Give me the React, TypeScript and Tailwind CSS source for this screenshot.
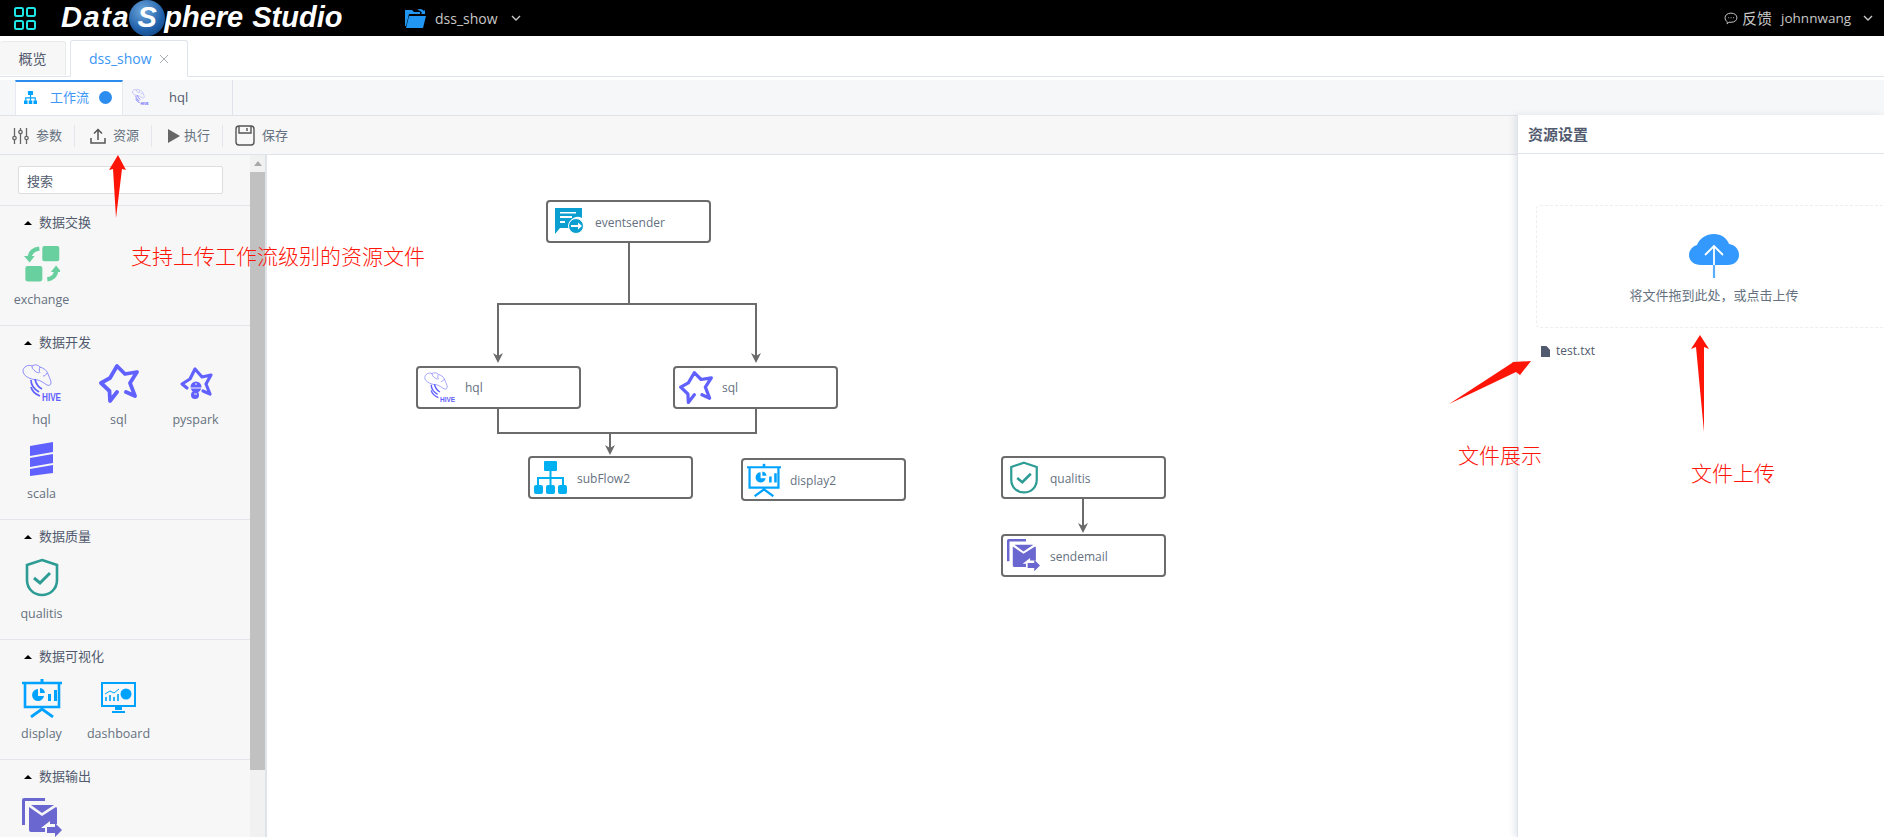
import React from "react";

const Hive = ({ s = 40 }: { s?: number }) => (
  <svg className="overflow-visible" width={s} height={s} viewBox="0 0 40 40" fill="none" stroke="#6161ff" strokeWidth="0.7">
    <path d="M1 7c0-4 5-7 9-5 3-2 6-1 8 1 3 1 7 3 8 7 1 3 3 6 3 9 0 2-2 3-4 2-3-2-6-4-9-5-5 0-15-3-15-9z" />
    <path d="M10 2c0 3 3 6 7 7M18 3c-1 2-1 4 0 6M25 9c-1 2-2 3-4 3" />
    <path d="M9 16c0 5 3 9 8 12M13 15c1 5 3 8 7 10M9 23c1 4 4 7 9 9" strokeWidth="1.700" />
    <text x="20" y="37" fontSize="10" fontWeight="700" fill="#6161ff" stroke="none" fontFamily="'Liberation Sans',sans-serif" textLength="19" lengthAdjust="spacingAndGlyphs">HIVE</text>
  </svg>
);

const Star = ({ s = 40 }: { s?: number }) => (
  <svg width={s} height={s} viewBox="0 0 40 40" fill="none" stroke="#6161ff" strokeWidth="3.800" strokeLinejoin="round" strokeLinecap="round">
    <path d="M27 28l9 4-5-13 7-11-12 2-8-8-7 12-9 5 8.500 8 .5 10 7-9" />
  </svg>
);

const PySpark = ({ s = 40 }: { s?: number }) => (
  <svg width={s} height={s} viewBox="0 0 40 40" fill="none">
    <path d="M27 27l7 3-4-10 5-9-9 2-7-8-5 10-8 5 5 4" stroke="#6161ff" strokeWidth="3.200" strokeLinejoin="round" strokeLinecap="round" />
    <circle cx="20" cy="23" r="5.500" fill="#6161ff" />
    <path d="M14 24h12M20 19v2" stroke="#f7f7f7" strokeWidth="1" />
    <circle cx="19" cy="31" r="4" fill="#6161ff" />
    <path d="M18 30h3" stroke="#f7f7f7" strokeWidth="1" />
  </svg>
);

const Scala = ({ s = 40 }: { s?: number }) => (
  <svg width={s} height={s} viewBox="0 0 40 40" fill="#6161ff">
    <path d="M8 8L31 4v10L8 18z" />
    <path d="M8 20l23-4v9L8 29z" />
    <path d="M8 31l23-4v8L8 38z" />
  </svg>
);

const Exchange = () => (
  <svg width="36" height="36" viewBox="0 0 34 34" fill="#68cf9e">
    <rect x="17.300" y="0" width="16" height="14.500" rx="2" />
    <rect x="1.300" y="19" width="16" height="14.500" rx="2" />
    <path d="M14.500 2.500C10 3 6 5.500 5.300 10.500" fill="none" stroke="#68cf9e" strokeWidth="4" />
    <path d="M5.300 15.500L0 9.500h10z" />
    <path d="M22 31.500c4-.5 8-3 8.300-8" fill="none" stroke="#68cf9e" strokeWidth="4" />
    <path d="M30.300 18.500l5 6h-10z" />
  </svg>
);

const Shield = ({ s = 40 }: { s?: number }) => (
  <svg width={s} height={s} viewBox="0 0 40 40" fill="none" stroke="#2d9c94" strokeWidth="2.600">
    <path d="M20 2l15 5v15c0 9-7 15-15 15S5 31 5 22V7z" />
    <path d="M12 20l6 5 10-10" strokeWidth="3" />
  </svg>
);

const Display = ({ s = 40 }: { s?: number }) => (
  <svg width={s} height={s} viewBox="0 0 40 40" fill="none" stroke="#00a2ff">
    <path d="M0 5h40" strokeWidth="2.400" />
    <path d="M20 1v4" strokeWidth="3" />
    <path d="M3 5v24h34V5" strokeWidth="2.600" />
    <path d="M20 29v2M9 39l11-8 11 8" strokeWidth="2.800" />
    <path d="M16 11a6 6 0 1 0 6 7h-6z" fill="#00a2ff" stroke="none" />
    <path d="M18 10a6 6 0 0 1 5 5h-5z" fill="#00a2ff" stroke="none" />
    <path d="M26 16v7h3v-7zM32 12v11h3V12z" fill="#00a2ff" stroke="none" />
  </svg>
);

const Dashboard = () => (
  <svg width="36" height="32" viewBox="0 0 36 32" fill="none" stroke="#00a2ff">
    <rect x="1" y="1" width="33" height="23" strokeWidth="2" />
    <path d="M14 24h7v4h-7zM11 29h13v2H11z" fill="#00a2ff" stroke="none" />
    <circle cx="25" cy="12" r="5.500" fill="#00a2ff" stroke="none" />
    <path d="M5 19v-4M9 19v-6M13 19v-4M17 19v-7" strokeWidth="1.600" />
    <path d="M4 12l5-3 4 2 5-4" strokeWidth="1" />
  </svg>
);

const SendEmail = ({ s = 40 }: { s?: number }) => (
  <svg width={s} height={s} viewBox="0 0 40 40" fill="#6a68d0">
    <path d="M0 2a2 2 0 0 1 2-2h21v3H3v24H0z" />
    <path d="M7 9l13 9 14-9a2 2 0 0 1 1 2v15h-7v-3l-9 7h4v4H9a2 2 0 0 1-2-2z" />
    <path d="M9 7h23L20 15z" />
    <path d="M25 29h8v-4l7 7-7 7v-4h-8z" />
  </svg>
);

const EventSender = () => (
  <svg width="30" height="28" viewBox="0 0 30 28" fill="#0a9fd0">
    <path d="M1 0h27v10a9 9 0 0 0-13 10H6l-5 6z" />
    <path d="M6 4h16v1.600H6zM6 8h12v2H6zM6 13h5v2H6z" fill="#fff" />
    <circle cx="22" cy="18" r="7.500" stroke="#fff" strokeWidth="1" />
    <path d="M17 17h7v-2.500l4 3.500-4 3.500V19h-7z" fill="#fff" />
  </svg>
);

const SubFlow = () => (
  <svg width="33" height="33" viewBox="0 0 33 33" fill="#00b0f0">
    <rect x="10" y="0" width="13" height="10" rx="1" />
    <rect x="0" y="24" width="9" height="9" rx="2" />
    <rect x="12" y="24" width="9" height="9" rx="2" />
    <rect x="24" y="24" width="9" height="9" rx="2" />
    <path d="M15.500 10h2v6H30v8h-2v-6h-10.500v6h-2v-6H5v6H3v-8h12.500z" />
  </svg>
);

const Sep = ({ cls }: { cls: string }) => <div className={`w-px h-[22px] bg-[#e3e6ec] ${cls}`} />;

const Section = ({ title, rows }: { title: string; rows: [React.ReactNode, string][][] }) => (
  <div className="border-b border-[#e3e5ea] pt-2 pb-[15px]">
    <div className="flex items-center h-[18px] pl-[24px] text-[13px] text-[#515a6e]">
      <span className="w-0 h-0 border-x-[4px] border-x-transparent border-b-[4px] border-b-black mr-[7px]" />
      {title}
    </div>
    <div className="mt-3 flex flex-col gap-[8px]">
      {rows.map((row, i) => (
        <div key={i} className="flex pl-[3px]">
          {row.map(([ic, l], j) => (
            <div key={j} className="w-[77px] flex flex-col items-center">
              <div className="h-[40px] flex items-center justify-center">{ic}</div>
              {l ? <div className="h-[20px] mt-[6px] text-[12.500px] leading-[20px] text-[#657180]">{l}</div> : null}
            </div>
          ))}
        </div>
      ))}
    </div>
  </div>
);

const Node = ({ cls, icon, label, iconCls, labelCls = "mt-[2px]" }: { cls: string; icon: React.ReactNode; label: string; iconCls: string; labelCls?: string }) => (
  <div className={`absolute w-[165px] h-[43px] bg-white border-[2px] border-[#6b6b6b] rounded-[4px] flex items-center ${cls}`}>
    <div className={`flex items-center w-[47px] ${iconCls}`}>{icon}</div>
    <span className={`text-[12px] text-[#657180] ${labelCls}`}>{label}</span>
  </div>
);

const Red = ({ cls, children }: { cls: string; children: React.ReactNode }) => (
  <div className={`absolute z-20 text-[21px] leading-[28px] font-light text-[#ff1408] whitespace-nowrap font-['Noto_Sans_CJK_SC',sans-serif] ${cls}`}>{children}</div>
);

const Chevron = ({ cls }: { cls: string }) => (
  <svg className={cls} width="10" height="6" viewBox="0 0 10 6" fill="none" stroke="#c8c8c8" strokeWidth="1.400"><path d="M1 1l4 4 4-4" /></svg>
);

export default function App() {
  return (
    <div className="relative w-[1884px] h-[837px] overflow-hidden bg-white flex flex-col font-['Open_Sans','Noto_Sans_CJK_SC',sans-serif]">
      <header className="h-[36px] shrink-0 bg-black flex items-center overflow-hidden">
        <svg className="ml-[14px]" width="22" height="24" viewBox="0 0 22 24" fill="none" stroke="#1ee6e6" strokeWidth="2">
          <rect x="1" y="2" width="8" height="8" rx="1.500" />
          <rect x="13" y="2" width="8" height="8" rx="1.500" />
          <rect x="1" y="15" width="8" height="8" rx="1.500" />
          <rect x="13" y="15" width="8" height="8" rx="1.500" />
        </svg>
        <div className="ml-[25px] w-[300px] flex items-center text-white text-[29px] font-bold italic font-['Liberation_Sans',sans-serif]">
          <span className="tracking-[1.600px]">Data</span>
          <span className="w-[36px] h-[36px] rounded-full -ml-[1px] flex items-center justify-center bg-[radial-gradient(circle_at_40%_30%,#6fa8dc,#1f5fa8_60%,#0d3a70)]">
            S
          </span>
          <span className="-ml-[1px]">phere</span>
          <span className="ml-[9px]">Studio</span>
        </div>
        <svg className="ml-[44px]" width="21" height="20" viewBox="0 0 21 20" fill="#2196f3">
          <path d="M0 2h7l2 2h6v2H4L1 18H0z" />
          <path d="M4 8h17l-3 12H1z" />
          <path d="M12 2c3-2 5-1 7 1l1-1v4h-4l1-1c-1-2-3-3-5-3z" />
        </svg>
        <span className="ml-[9px] text-[14px] text-[#c8c8c8]">dss_show</span>
        <Chevron cls="ml-[13px]" />
        <div className="ml-auto flex items-center text-[14px] text-[#c8c8c8]">
          <svg width="14" height="13" viewBox="0 0 13 12" fill="none" stroke="#c8c8c8" strokeWidth="0.900">
            <path d="M6.500 1C10 1 12 3 12 5.300S10 9.500 6.500 9.500H4.500L3 11V9C1.800 8.300 1 7 1 5.300 1 3 3 1 6.500 1z" />
            <path d="M4 5.300h.8M6.200 5.300H7M8.400 5.300h.8" />
          </svg>
          <span className="ml-[4px] text-[15px]">反馈</span>
          <span className="ml-[9px] text-[13.500px]">johnnwang</span>
          <Chevron cls="ml-[12px] mr-[11px]" />
        </div>
      </header>

      <div className="h-[41px] shrink-0 pt-[4px] flex border-b border-[#dfe3ea] bg-white">
        <div className="w-[66px] h-[34px] mt-[1px] bg-[#f7f7f7] border border-[#e8eaec] border-b-0 border-l-0 rounded-t-[3px] flex items-center justify-center text-[14px] text-[#515a6e]">概览</div>
        <div className="ml-[4px] w-[118px] h-[37px] bg-white border border-[#dfe3ea] border-b-white rounded-t-[3px] flex items-center pl-[18px] text-[14px] text-[#3c96f5]">
          dss_show
          <svg className="ml-[7px]" width="10" height="10" viewBox="0 0 10 10" stroke="#a8adb5" fill="none"><path d="M1 1l8 8M9 1l-8 8" /></svg>
        </div>
      </div>

      <div className="h-[3px] shrink-0 bg-white" />

      <div className="h-[35px] shrink-0 bg-[#f6f7f8] flex pl-[15px]">
        <div className="w-[108px] h-[35px] bg-white border-t-[2px] border-[#2d8cf0] border-x border-x-[#e6e9ef] flex items-center pb-[2px]">
          <svg className="ml-[8px]" width="13" height="13" viewBox="0 0 33 33" fill="#00a2ff">
            <rect x="10" y="0" width="13" height="10" rx="1" />
            <rect x="0" y="24" width="9" height="9" />
            <rect x="12" y="24" width="9" height="9" />
            <rect x="24" y="24" width="9" height="9" />
            <path d="M15 10h3v6h12v8h-3v-5h-9v5h-3v-5H6v5H3v-8h12z" />
          </svg>
          <span className="ml-[13px] text-[13px] text-[#3c96f5]">工作流</span>
          <span className="ml-[10px] w-[13px] h-[13px] rounded-full bg-[#2d8cf0]" />
        </div>
        <div className="w-[110px] h-[35px] border-r border-[#dfe3ea] flex items-center">
          <div className="ml-[9px]"><Hive s={17} /></div>
          <span className="ml-[20px] text-[13px] text-[#515a6e]">hql</span>
        </div>
      </div>

      <div className="flex-1 flex min-h-0">
        <div className="w-[1517px] flex flex-col min-h-0 border-t border-[#dfe3ea]">
          <div className="h-[39px] shrink-0 pt-[1px] bg-[#f7f7f7] border-b border-[#dfe3ea] flex items-center text-[13px] text-[#657180]">
            <svg className="ml-[12px]" width="17" height="18" viewBox="0 0 17 18" fill="none" stroke="#666" strokeWidth="1.300">
              <path d="M2.500 1v8M2.500 13v4M8.500 1v2M8.500 7v10M14.500 1v8M14.500 13v4" />
              <circle cx="2.500" cy="11" r="1.700" /><circle cx="8.500" cy="5" r="1.700" /><circle cx="14.500" cy="11" r="1.700" />
            </svg>
            <span className="ml-[7px]">参数</span>
            <Sep cls="ml-[12px]" />
            <svg className="ml-[15px]" width="16" height="16" viewBox="0 0 16 16" fill="none" stroke="#555" strokeWidth="1.500">
              <path d="M8 12V2M4 5.500L8 1.500l4 4M1 10v5h14v-5" />
            </svg>
            <span className="ml-[7px]">资源</span>
            <Sep cls="ml-[12px]" />
            <svg className="ml-[16px]" width="12" height="14" viewBox="0 0 12 14" fill="#666"><path d="M0 0l12 7-12 7z" /></svg>
            <span className="ml-[4px]">执行</span>
            <Sep cls="ml-[12px]" />
            <svg className="ml-[12px]" width="20" height="21" viewBox="0 0 20 21" fill="none" stroke="#555" strokeWidth="1.400">
              <rect x="1" y="1" width="18" height="19" rx="3" />
              <path d="M4 1v7h12V1M12 3v3" />
            </svg>
            <span className="ml-[7px]">保存</span>
          </div>
          <div className="flex-1 flex min-h-0">
            <div className="w-[250px] shrink-0 bg-[#f7f7f7] overflow-hidden">
              <div className="h-[51px] border-b border-[#e3e5ea] pl-[18px] pt-[11px]">
                <div className="w-[205px] h-[28px] bg-white border border-[#dcdee2] rounded-[2px] pl-[8px] pt-[1px] text-[13px] leading-[26px] text-[#515a6e]">搜索</div>
              </div>
              <Section title="数据交换" rows={[[[<Exchange />, "exchange"]]]} />
              <Section
                title="数据开发"
                rows={[
                  [[<Hive />, "hql"], [<Star />, "sql"], [<PySpark />, "pyspark"]],
                  [[<Scala />, "scala"]],
                ]}
              />
              <Section title="数据质量" rows={[[[<Shield />, "qualitis"]]]} />
              <Section title="数据可视化" rows={[[[<Display />, "display"], [<Dashboard />, "dashboard"]]]} />
              <Section title="数据输出" rows={[[[<SendEmail />, ""]]]} />
            </div>
            <div className="w-[16px] shrink-0 bg-[#f1f1f1] flex flex-col items-center border-r border-[#dfe3ea]">
              <div className="mt-[6px] w-0 h-0 border-x-[4px] border-x-transparent border-b-[5px] border-b-[#a8a8a8]" />
              <div className="mt-[6px] w-[15px] h-[598px] bg-[#c1c1c1]" />
            </div>
            <div className="relative flex-1 bg-white border-l border-[#dfe3ea]">
              <svg className="absolute inset-0" width="1250" height="682" fill="none" stroke="#6b6b6b" strokeWidth="2">
                <path d="M362 88V149M231 205V149H489V205M231 253V278H489V253M343 278V297M816 344V375" />
                <g fill="#6b6b6b" stroke="none">
                  <path d="M231 208l-5-10 5 3 5-3z" />
                  <path d="M489 208l-5-10 5 3 5-3z" />
                  <path d="M343 300l-5-10 5 3 5-3z" />
                  <path d="M816 378l-5-10 5 3 5-3z" />
                </g>
              </svg>
              <Node cls="left-[279px] top-[45px]" iconCls="pl-[6px]" icon={<EventSender />} label="eventsender" />
              <Node cls="left-[149px] top-[211px]" iconCls="pl-[6px]" icon={<Hive s={32} />} label="hql" labelCls="" />
              <Node cls="left-[406px] top-[211px]" iconCls="pl-[4px]" icon={<Star s={34} />} label="sql" labelCls="" />
              <Node cls="left-[261px] top-[301px]" iconCls="pl-[4px]" icon={<SubFlow />} label="subFlow2" />
              <Node cls="left-[474px] top-[303px]" iconCls="pl-[4px]" icon={<Display s={34} />} label="display2" />
              <Node cls="left-[734px] top-[301px]" iconCls="pl-[4px]" icon={<Shield s={34} />} label="qualitis" />
              <Node cls="left-[734px] top-[379px]" iconCls="pl-[4px]" icon={<SendEmail s={33} />} label="sendemail" />
            </div>
          </div>
        </div>

        <aside className="w-[367px] shrink-0 bg-white border-l border-[#dfe3ea] shadow-[-3px_0_6px_rgba(180,190,210,0.35)] overflow-hidden z-10">
          <div className="h-[39px] border-b border-[#dfe3ea] pl-[10px] flex items-center text-[15px] font-bold text-[#515a6e]">资源设置</div>
          <div className="ml-[18px] mt-[51px] w-[356px] h-[123px] border border-dashed border-[#eeeeee] rounded-[4px] flex flex-col items-center pt-[28px]">
            <svg width="50" height="44" viewBox="0 0 50 44" fill="none">
              <path d="M12 31C5 31 0 27 0 21c0-5 4-9 8-10C11 4 17 0 25 0c7 0 13 4 15 10 6 1 10 5 10 11s-5 10-11 10z" fill="#3399ff" />
              <path d="M25 13v18M16 21l9-9 9 9" stroke="#fff" strokeWidth="1.800" />
              <path d="M25 31v13" stroke="#5cadff" strokeWidth="2.200" />
            </svg>
            <div className="mt-[7px] text-[13px] leading-[20px] text-[#657180]">将文件拖到此处，或点击上传</div>
          </div>
          <div className="ml-[23px] mt-[15px] flex items-center h-[16px] text-[12px] text-[#515a6e]">
            <svg width="9" height="11" viewBox="0 0 10 12" fill="#515a6e"><path d="M0 0h6l4 4v8H0z" /></svg>
            <span className="ml-[6px]">test.txt</span>
          </div>
        </aside>
      </div>

      <svg className="absolute inset-0 z-20 pointer-events-none" width="1884" height="837" fill="#ff1408">
        <path d="M118 155l8 15-4-1-6 49-3-49-4 1z" />
        <path d="M1449 404l63-41 1-1 18-1-11 14-4-3z" />
        <path d="M1700 335l9 14-5-2 0 85-8-85-5 2z" />
      </svg>
      <Red cls="left-[131px] top-[241px]">支持上传工作流级别的资源文件</Red>
      <Red cls="left-[1458px] top-[440px]">文件展示</Red>
      <Red cls="left-[1691px] top-[458px]">文件上传</Red>
    </div>
  );
}
